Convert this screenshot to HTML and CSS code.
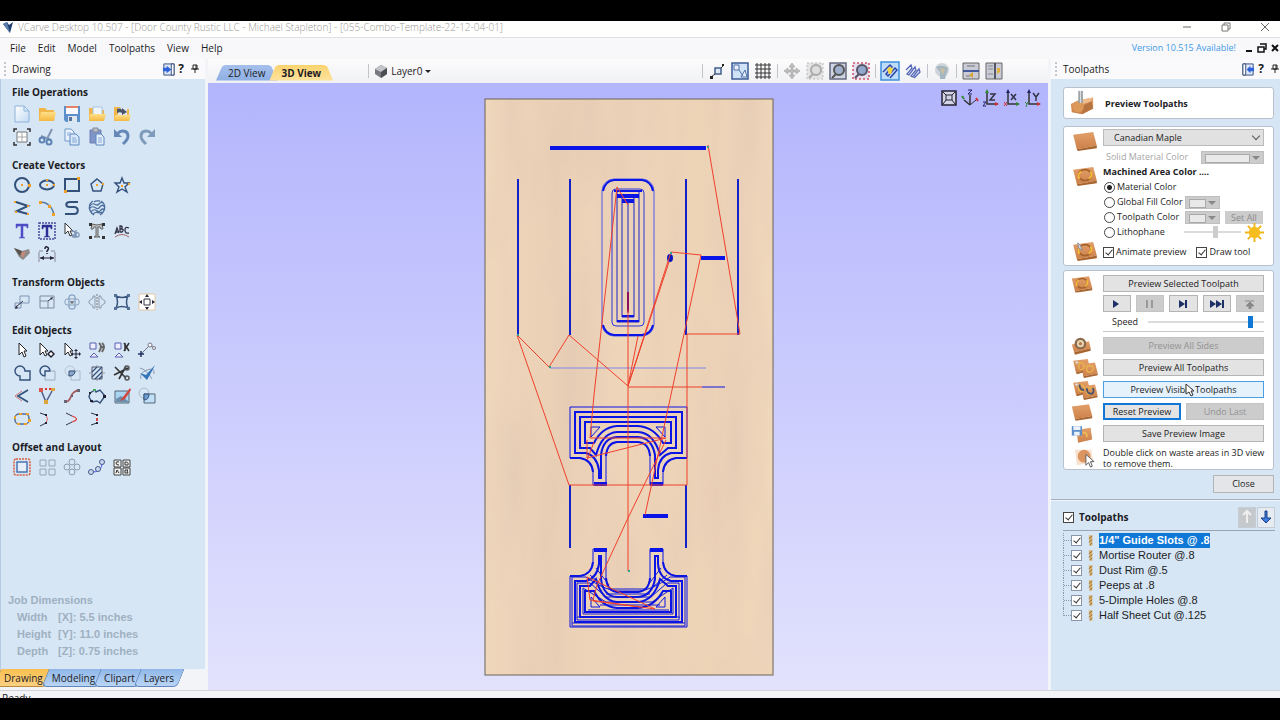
FILE: index.html
```
<!DOCTYPE html>
<html lang="en">
<head>
<meta charset="utf-8">
<title>VCarve Desktop 10.507</title>
<meta name="viewport" content="width=device-width, initial-scale=1">
<link rel="stylesheet" href="styles.css">
</head>
<body>

<!-- icon sheet -->
<svg class="sheet" aria-hidden="true">
<defs>
<linearGradient id="gOrange" x1="0" y1="0" x2="0" y2="1"><stop offset="0" stop-color="#e3a06a"/><stop offset="1" stop-color="#cc8048"/></linearGradient>
<linearGradient id="gFolder" x1="0" y1="0" x2="0" y2="1"><stop offset="0" stop-color="#fde08a"/><stop offset="1" stop-color="#f5b840"/></linearGradient>
<linearGradient id="gPage" x1="0" y1="0" x2="1" y2="1"><stop offset="0" stop-color="#fff"/><stop offset="1" stop-color="#c2daf3"/></linearGradient>
</defs>

<!-- file -->
<symbol id="new" viewBox="0 0 20 20"><path d="M3 2h9l5 5v11H3z" fill="url(#gPage)" stroke="#8fb2da"/><path d="M12 2v5h5z" fill="#dcebfa" stroke="#8fb2da"/></symbol>
<symbol id="open" viewBox="0 0 20 20"><path d="M2 4h6l2 2h7v11H2z" fill="#f0b64a"/><path d="M4 8h15l-2 9H2z" fill="url(#gFolder)"/></symbol>
<symbol id="save" viewBox="0 0 20 20"><path d="M2 2h16v16H4l-2-2z" fill="#5d8fcb"/><path d="M4 2h12v8H4z" fill="#f7f9fc"/><path d="M4 2h12v2H4z" fill="#e87f66"/><path d="M6 12h9v6H6z" fill="#dfe6ee"/><path d="M7 13h3v4H7z" fill="#56749c"/></symbol>
<symbol id="open2" viewBox="0 0 20 20"><path d="M2 4h5l2 2h8v11H2z" fill="#f0b64a"/><path d="M6 3h9v9H6z" fill="#eef4fb" stroke="#aac3df"/><path d="M3 10h16l-2 7H2z" fill="url(#gFolder)"/></symbol>
<symbol id="import" viewBox="0 0 20 20"><path d="M2 3h6l2 2h7v12H2z" fill="#f0b64a"/><path d="M6 4h9v7H6z" fill="#dfe8f2"/><path d="M5 5c4-1 5 0 5 2V4l5 4-5 3V9C9 8 7 8 5 9z" fill="#4b5566"/><path d="M3 11h16l-2 6H2z" fill="url(#gFolder)"/></symbol>
<symbol id="job" viewBox="0 0 20 20"><path d="M5 5h10v10H5z" fill="#fff" stroke="#777"/><path d="M10 5v10M5 10h10" stroke="#aaa"/><path d="M2 5V2h3M15 2h3v3M18 15v3h-3M5 18H2v-3" fill="none" stroke="#333" stroke-width="1.5"/></symbol>
<symbol id="cut" viewBox="0 0 20 20"><path d="M15 2l-5 10M4 9l10 4" stroke="#8297b3" stroke-width="2"/><g fill="none" stroke="#5d83b5" stroke-width="2"><circle cx="5" cy="13" r="2.5"/><circle cx="12" cy="15" r="2.5"/></g></symbol>
<symbol id="copy" viewBox="0 0 20 20"><path d="M3 2h6l3 3v9H3z" fill="#e9f2fc" stroke="#6f97c8"/><path d="M8 7h6l3 3v8H8z" fill="#d8e8fa" stroke="#5d88c0"/><path d="M5 6h4M5 8h3M10 11h4M10 13h5M10 15h5" stroke="#88aad4"/></symbol>
<symbol id="paste" viewBox="0 0 20 20"><path d="M3 3h11v13H3z" fill="#8095ca" stroke="#6c7fb2"/><path d="M6 1h5v4H6z" fill="#b9bfca" stroke="#828a99"/><path d="M9 7h5l3 3v8H9z" fill="#e4eefb" stroke="#5d88c0"/><path d="M11 11h4M11 13h4M11 15h4" stroke="#88aad4"/></symbol>
<symbol id="undo" viewBox="0 0 20 20"><path d="M5 7c5-5 11-3 11 2 0 4-3 6-5 8" fill="none" stroke="#6688b8" stroke-width="3"/><path d="M2 2v8h8z" fill="#6688b8"/></symbol>
<symbol id="redo" viewBox="0 0 20 20"><path d="M15 7C10 2 4 4 4 9c0 4 3 6 5 8" fill="none" stroke="#7f9bbb" stroke-width="3"/><path d="M18 2v8h-8z" fill="#7f9bbb"/></symbol>

<!-- create vectors -->
<symbol id="circle" viewBox="0 0 20 20"><circle cx="10" cy="10" r="7" fill="none" stroke="#33507a" stroke-width="2"/><path d="M9 9h2v2H9zM16 9h3v3h-3z" fill="#eda128"/></symbol>
<symbol id="ellipse" viewBox="0 0 20 20"><ellipse cx="10" cy="10" rx="7" ry="4.500" fill="none" stroke="#33507a" stroke-width="2"/><path d="M9 9h2v2H9zM9 4h2v2H9zM16 9h2v2h-2z" fill="#eda128"/></symbol>
<symbol id="rect" viewBox="0 0 20 20"><path d="M3 4h14v12H3z" fill="none" stroke="#33507a" stroke-width="2"/><path d="M2 15h3v3H2zM15 2h3v3h-3z" fill="#eda128"/></symbol>
<symbol id="poly" viewBox="0 0 20 20"><path d="M10 4l6 5-2 7H6L4 9z" fill="none" stroke="#33507a" stroke-width="1.400"/><path d="M9 9h2v2H9zM15 8h2v2h-2z" fill="#eda128"/></symbol>
<symbol id="star" viewBox="0 0 20 20"><path d="M10 3l2 5h5l-4 4 2 5-5-3-5 3 2-5-4-4h5z" fill="none" stroke="#33507a" stroke-width="1.400"/><path d="M9 10h2v2H9zM16 8h2v2h-2z" fill="#eda128"/></symbol>
<symbol id="line" viewBox="0 0 20 20"><path d="M4 4l12 4-11 5 11 3" fill="none" stroke="#33507a" stroke-width="2"/><path d="M2 3h2v2H2zM15 7h2v2h-2zM3 13h2v2H3zM15 15h2v2h-2z" fill="#eda128"/></symbol>
<symbol id="arc" viewBox="0 0 20 20"><path d="M3 4c8 0 12 5 14 12" fill="none" stroke="#5c7da8" stroke-width="1.400"/><path d="M2 3h3v3H2zM11 7h3v3h-3zM15 15h3v3h-3z" fill="#eda128"/></symbol>
<symbol id="curve" viewBox="0 0 20 20"><path d="M16 4H8c-5 0-5 5 0 5h4c5 0 5 7 0 7H3" fill="none" stroke="#33507a" stroke-width="2"/></symbol>
<symbol id="texture" viewBox="0 0 20 20"><g fill="none" stroke="#4b6d9c" stroke-width="1.300"><path d="M3 8c4-6 6 2 9-2 2-2 3-2 4-1M2 11c5-6 7 2 10-1 3-4 4-3 6-1M4 14c4-6 7 2 9-1 2-3 4-2 5-1M6 16c4-4 6 1 9-2M7 4c2-2 4-1 6-1"/><path d="M6 3c-5 3-5 10 1 14M14 3c5 3 5 10-1 14"/></g></symbol>
<symbol id="text" viewBox="0 0 20 20"><path d="M4 3h12v4h-1c0-2-1-2-4-2v11l2 1H7l2-1V5C6 5 5 5 5 7H4z" fill="#4f4ec4" stroke="#4f4ec4" stroke-width=".5"/></symbol>
<symbol id="textbox" viewBox="0 0 20 20"><path d="M2 2h16v16H2z" fill="none" stroke="#4a4a9a" stroke-width="1.500" stroke-dasharray="2 1"/><path d="M5 4h10v4h-1c0-2-1-2-3-2v9l2 1H7l2-1V6C7 6 6 6 6 8H5z" fill="#2f2f94" stroke="#2f2f94" stroke-width=".5"/></symbol>
<symbol id="pick" viewBox="0 0 20 20"><path d="M3 2v11l3-3 2 5 2-1-2-4h3z" fill="#fff" stroke="#333"/><path d="M10 10q3 0 3 2v4h-2q-2-2 2-2M14 9v7q4 0 3-3-1-2-3-1" fill="none" stroke="#7b93b3" stroke-width="1.300"/></symbol>
<symbol id="textfit" viewBox="0 0 20 20"><path d="M5 3q5 2 10 0l1 5h-2l-1-2h-2v9l2 1H7l2-1V6H7L6 8H4z" fill="#bbb" stroke="#666"/><path d="M2 2h3v3H2zM15 2h3v3h-3zM2 15h3v3H2zM15 15h3v3h-3z" fill="#333"/></symbol>
<symbol id="textarc" viewBox="0 0 20 20"><path d="M3 13l2-6 2 5M4 11h3M8 11V5q4 0 1 3 4 0 1 3H8M17 7q-4-2-4 2t4 3" fill="none" stroke="#334" stroke-width="1.300"/><path d="M3 16q7-5 14 0" fill="none" stroke="#a66"/></symbol>
<symbol id="trace" viewBox="0 0 20 20"><path d="M2 4l8 3 7-2 1 4-7 7-4-3z" fill="#8c8a8a"/><path d="M8 9l6-2-3 7z" fill="#c68877"/><path d="M2 4l8 3-2 5z" fill="#59534e"/></symbol>
<symbol id="dims" viewBox="0 0 20 20"><path d="M2 8v10M18 8v10M2 7h4M14 7h4" stroke="#889" fill="none"/><path d="M3 14h14" stroke="#223"/><path d="M3 14l4-2v4zM17 14l-4-2v4z" fill="#223"/><path d="M8 5q0-3 2-2 3 1 0 4v1M10 9v1" stroke="#223" fill="none" stroke-width="1.500"/></symbol>

<!-- transform -->
<symbol id="move" viewBox="0 0 20 20"><path d="M8 4h9v7H8zM3 11h6v5H3z" fill="none" stroke="#7d94b5"/><path d="M4 15l7-6" stroke="#334"/><path d="M3 17l1-4 2 3z" fill="#334"/></symbol>
<symbol id="size" viewBox="0 0 20 20"><path d="M3 4h14v12H3zM3 9h8v7" fill="none" stroke="#7d8ba0"/><path d="M11 9l4-3" stroke="#334"/><path d="M16 5l-1 3-2-2z" fill="#334"/></symbol>
<symbol id="rotate" viewBox="0 0 20 20"><rect x="7" y="3" width="6" height="14" rx="2" fill="none" stroke="#6f8bb3"/><rect x="3" y="7" width="14" height="6" rx="2" fill="none" stroke="#8da2c0"/><path d="M10 9v3M8 10h4" stroke="#555"/></symbol>
<symbol id="mirror" viewBox="0 0 20 20"><path d="M8 4v12H6v-2l-4-3V9l4-3V4zM12 4v12h2v-2l4-3V9l-4-3V4z" fill="none" stroke="#8d99aa"/><path d="M10 2v16" stroke="#777" stroke-dasharray="2 1"/></symbol>
<symbol id="distort" viewBox="0 0 20 20"><path d="M4 4q6 3 12 0-3 6 0 12-6-3-12 0 3-6 0-12z" fill="none" stroke="#38547d" stroke-width="1.500"/><path d="M2 2h3v3H2zM15 2h3v3h-3zM2 15h3v3H2zM15 15h3v3h-3z" fill="#52729a"/></symbol>
<symbol id="align" viewBox="0 0 20 20"><path d="M2 2h16v16H2z" fill="#fff" stroke="#e5c7a8"/><path d="M7 7h6v6H7z" fill="none" stroke="#334"/><path d="M10 2l2 3H8zM10 18l2-3H8zM2 10l3 2V8zM18 10l-3 2V8z" fill="#223"/></symbol>

<!-- edit -->
<symbol id="select" viewBox="0 0 20 20"><path d="M7 3v12l3-3 2 5 2-1-2-5h3z" fill="#fff" stroke="#222"/></symbol>
<symbol id="node" viewBox="0 0 20 20"><path d="M3 3v12l3-3 2 4 2-1-2-4h3z" fill="#fff" stroke="#222"/><path d="M14 10l4 4-4 4-4-4z" fill="#223"/><path d="M14 12l2 2-2 2-2-2z" fill="#fff"/></symbol>
<symbol id="xform" viewBox="0 0 20 20"><path d="M3 3v12l3-3 2 4 2-1-2-4h3z" fill="#fff" stroke="#222"/><path d="M14 10v8M10 14h8" stroke="#223"/><path d="M14 9l2 2h-4zM14 19l2-2h-4zM9 14l2-2v4zM19 14l-2-2v4z" fill="#223"/></symbol>
<symbol id="group" viewBox="0 0 20 20"><path d="M3 3h6v6H3zM3 17l4-4 4 4z" fill="#eef" stroke="#5b5fb0"/><path d="M12 3q4 3 0 9M15 3q4 3 0 9M13 7h4" fill="none" stroke="#666" stroke-width="2"/></symbol>
<symbol id="ungroup" viewBox="0 0 20 20"><path d="M3 3h6v6H3zM3 17l4-4 4 4z" fill="#eef" stroke="#5b5fb0"/><path d="M12 3l5 8M17 3l-5 8M13 3v8" stroke="#333" stroke-width="1.500"/></symbol>
<symbol id="measure" viewBox="0 0 20 20"><path d="M4 14l9-9 4 3" fill="none" stroke="#778"/><circle cx="13" cy="5" r="2" fill="#fff" stroke="#778"/><circle cx="17" cy="8" r="1.500" fill="#fff" stroke="#778"/><path d="M4 11v6M1 14h6" stroke="#236" stroke-width="1.500"/></symbol>
<symbol id="weld" viewBox="0 0 20 20"><path d="M13 8h5v9H8v-4a5 5 0 1 1 5-5z" fill="none" stroke="#33507a" stroke-width="1.400"/></symbol>
<symbol id="subtract" viewBox="0 0 20 20"><path d="M8 13a5 5 0 1 1 5-5H8z" fill="none" stroke="#33507a" stroke-width="1.400"/><path d="M13 8h5v9H8v-4" fill="none" stroke="#9cabc0"/></symbol>
<symbol id="intersect" viewBox="0 0 20 20"><circle cx="8" cy="8" r="5" fill="none" stroke="#b9c5d5"/><path d="M9 8h9v9H9z" fill="none" stroke="#aab7c9"/><path d="M7 8h6q0 5-6 5z" fill="#8fa8ca" stroke="#33507a"/></symbol>
<symbol id="hatch" viewBox="0 0 20 20"><path d="M5 4h10v12H5z" fill="none" stroke="#556"/><path d="M5 9l5-5M5 14L15 4M8 16l7-7M12 16l3-3" stroke="#33507a" stroke-width="1.300"/><path d="M2 10h2M16 10h2M10 2v1M10 17v1" stroke="#999"/></symbol>
<symbol id="trim" viewBox="0 0 20 20"><path d="M3 4l11 11M2 12l14-7M7 16L14 3" stroke="#333" stroke-width="1.600"/><g fill="none" stroke="#555" stroke-width="1.500"><circle cx="15" cy="5" r="2"/><circle cx="15" cy="15" r="2"/></g></symbol>
<symbol id="knife" viewBox="0 0 20 20"><path d="M3 5q6 1 12 11M4 16Q2 10 10 7t7 4" fill="none" stroke="#8b9ab0"/><path d="M18 2l-3 6-5 9-7-7 6 2z" fill="#3474b8"/></symbol>
<symbol id="fillet" viewBox="0 0 20 20"><path d="M16 4L6 10l10 6" fill="none" stroke="#33507a" stroke-width="1.700"/><path d="M10 5L3 10l7 5" fill="none" stroke="#c77"/></symbol>
<symbol id="extend" viewBox="0 0 20 20"><path d="M4 4l5 12 6-11" fill="none" stroke="#555b8b" stroke-width="1.500"/><path d="M4 3h12" stroke="#d33" stroke-dasharray="2 2" stroke-width="2"/><path d="M2 2h4v4H2z" fill="#d9534a"/><path d="M14 2h4v3h-4zM7 14h4v4H7z" fill="#dca43a"/></symbol>
<symbol id="scurve" viewBox="0 0 20 20"><path d="M3 16c8 0 3-10 14-12" fill="none" stroke="#a55" stroke-width="1.800"/><path d="M2 14h3v3H2zM15 3h3v3h-3zM9 9h2v2H9z" fill="#667"/></symbol>
<symbol id="join" viewBox="0 0 20 20"><path d="M3 7l5-3 1 2 4-2 5 6-5 7-3-2-5 1-3-5z" fill="none" stroke="#33507a" stroke-width="1.400"/><path d="M6 3h3v2H6z" fill="#48a55a"/><path d="M16 9h3v3h-3zM2 6h2v2H2zM3 14h3v2H3z" fill="#223"/></symbol>
<symbol id="bmp" viewBox="0 0 20 20"><path d="M3 5h14v12H3z" fill="#a9d4f2" stroke="#567"/><path d="M4 13l5-3 7 5v1H4z" fill="#6c8ea8"/><path d="M18 2l-7 9-3 4 5-2 6-9z" fill="#d0453c"/></symbol>
<symbol id="crop" viewBox="0 0 20 20"><circle cx="7" cy="7" r="5" fill="none" stroke="#aebbcb"/><path d="M7 8h11v9H7z" fill="#bfe0f7" stroke="#567"/><path d="M7 8h5q0 6-5 6z" fill="#6f9ed2" stroke="#33507a"/></symbol>
<symbol id="nodes" viewBox="0 0 20 20"><rect x="3" y="5" width="14" height="10" rx="4" fill="none" stroke="#556e96" stroke-width="1.500"/><path d="M2 7h2v3H2zM7 4h3v2H7zM14 4h3v2h-3zM16 10h3v3h-3zM12 14h3v2h-3zM5 14h3v2H5z" fill="#eda128"/></symbol>
<symbol id="fit1" viewBox="0 0 20 20"><path d="M3 4l6 2M9 14l-6 3" stroke="#334" fill="none"/><path d="M9 6q3 4 0 8" fill="none" stroke="#d66"/><path d="M8 5h2v2H8zM8 13h2v2H8z" fill="#223"/></symbol>
<symbol id="fit2" viewBox="0 0 20 20"><path d="M4 4l6 3M4 16l6-3" stroke="#334" fill="none"/><path d="M10 7q9 3 0 6" fill="none" stroke="#d44" stroke-width="1.300"/></symbol>
<symbol id="fit3" viewBox="0 0 20 20"><path d="M4 4l6 2M4 16l6-2" stroke="#334" fill="none"/><path d="M9 5h2v2H9zM9 13h2v2H9z" fill="#223"/><path d="M9 9h2v3H9z" fill="#d44"/></symbol>

<!-- offset -->
<symbol id="offset" viewBox="0 0 20 20"><rect x="2" y="2" width="16" height="16" rx="2" fill="none" stroke="#d65c3c" stroke-width="1.500" stroke-dasharray="2 1"/><path d="M5 5h10v10H5z" fill="#e6eefa" stroke="#4b74b3" stroke-width="1.500"/></symbol>
<symbol id="array" viewBox="0 0 20 20"><path d="M3 3h6v6H3zM12 3h6v6h-6zM3 12h6v6H3zM12 12h6v6h-6z" fill="none" stroke="#98a5b5"/></symbol>
<symbol id="ring" viewBox="0 0 20 20"><g fill="none" stroke="#8f9dae"><circle cx="10" cy="5" r="3"/><circle cx="10" cy="15" r="3"/><circle cx="5" cy="10" r="3"/><circle cx="15" cy="10" r="3"/></g></symbol>
<symbol id="along" viewBox="0 0 20 20"><path d="M4 15q12 1 11-11" fill="none" stroke="#55f"/><g fill="#cdd8ec" stroke="#445a8c"><circle cx="4" cy="15" r="2.500"/><circle cx="11" cy="12" r="2.500"/><circle cx="15" cy="5" r="2.500"/></g></symbol>
<symbol id="nest" viewBox="0 0 20 20"><path d="M2 3h7v7H2zM11 3h7v7h-7zM2 11h7v7H2zM11 11h7v7h-7z" fill="#eee" stroke="#444"/><path d="M7 5q-3-1-3 1t3 2M13 5q4 0 3 3h-3zM4 16l1-3 2 3M13 13h3l-1 1 1 2h-3z" fill="none" stroke="#333"/></symbol>

<!-- view toolbar -->
<symbol id="snap" viewBox="0 0 20 20"><path d="M8 7h6v6H8z" fill="#dfe9f6" stroke="#445f8c" stroke-width="1.500"/><path d="M4 16l4-3M14 7l3-3" stroke="#333"/><path d="M3 15h3v3H3zM15 3h2v2h-2z" fill="#222"/></symbol>
<symbol id="snap2" viewBox="0 0 20 20"><path d="M2 2h16v16H2z" fill="#cfe2f7" stroke="#3c5c96" stroke-width="1.500"/><path d="M4 4h5v5H4zM9 9l4 6M11 16l4-7 2 7z" fill="#eef" stroke="#4f73a8"/></symbol>
<symbol id="grid" viewBox="0 0 20 20"><path d="M4 2v16M8 2v16M12 2v16M16 2v16M2 4h16M2 8h16M2 12h16M2 16h16" stroke="#333"/></symbol>
<symbol id="pan" viewBox="0 0 20 20"><path d="M10 2l3 4h-2v3h3V7l4 3-4 3v-2h-3v3h2l-3 4-3-4h2v-3H6v2l-4-3 4-3v2h3V6H7z" fill="#bcbcbc" stroke="#999" stroke-width=".5"/></symbol>
<symbol id="zoomg" viewBox="0 0 20 20"><path d="M2 2h16v16H2z" fill="#e4e4e4" stroke="#bbb" stroke-dasharray="2 2"/><circle cx="11" cy="9" r="5" fill="#ddd" stroke="#aaa" stroke-width="2"/><path d="M8 13l-4 4" stroke="#aaa" stroke-width="2"/></symbol>
<symbol id="zoomb" viewBox="0 0 20 20"><path d="M2 2h16v16H2z" fill="#cfd4e2" stroke="#666a80" stroke-width="1.500"/><circle cx="11" cy="9" r="5" fill="#9fb0cc" stroke="#555" stroke-width="2"/><path d="M8 13l-4 4" stroke="#555" stroke-width="2"/></symbol>
<symbol id="zooms" viewBox="0 0 20 20"><path d="M2 2h16v16H2z" fill="#e5dff0" stroke="#d0526a" stroke-width="1.500" stroke-dasharray="2 2"/><circle cx="11" cy="9" r="5" fill="#93a6cc" stroke="#556" stroke-width="2"/><path d="M8 13l-4 4" stroke="#556" stroke-width="2"/></symbol>
<symbol id="tp1" viewBox="0 0 20 20"><path d="M1 1h18v18H1z" fill="#bfdcf8" stroke="#3f8fdc" stroke-width="1.500"/><path d="M3 11l7-7 2 2-6 7 2 2 7-8 2 2-7 8" fill="none" stroke="#2c45a8" stroke-width="1.500"/><path d="M7 8q3-4 6 0l-2 5H9z" fill="#f4d33e"/></symbol>
<symbol id="tp2" viewBox="0 0 20 20"><path d="M3 9l5-5 1 3-5 6 2 1 6-8 1 3-5 6 2 1 6-8 1 3-6 6" fill="none" stroke="#5467b8" stroke-width="1.300"/></symbol>
<symbol id="head" viewBox="0 0 20 20"><circle cx="10" cy="9" r="7" fill="#cfd4d8"/><path d="M4 6q6-3 12 1l-3 11H8V11z" fill="#a4b7c1"/><path d="M8 7l5 1-2 6z" fill="#cdbf9f"/></symbol>
<symbol id="tile1" viewBox="0 0 20 20"><path d="M2 2h16v16H2z" fill="#c9cbd6" stroke="#666"/><path d="M2 9h16v2H2z" fill="#445a9c"/><path d="M6 5h8M5 15h4" stroke="#777"/><path d="M8 14l4-3v6z" fill="#d9a436"/></symbol>
<symbol id="tile2" viewBox="0 0 20 20"><path d="M2 2h16v16H2z" fill="#c9cbd6" stroke="#666"/><path d="M10 2h2v16h-2z" fill="#556"/><path d="M4 5h5M4 8h5M4 13h5" stroke="#888"/><path d="M13 7h3v4l-3 2z" fill="#e5b040"/></symbol>
<symbol id="iso" viewBox="0 0 20 20"><path d="M3 3h14v14H3z" fill="#d4d5e6" stroke="#223" stroke-width="1.500"/><path d="M7 7h6v5H7zM4 4l3 3M16 4l-3 3M4 16l3-4M16 16l-3-4" fill="none" stroke="#223"/></symbol>
<symbol id="axis" viewBox="0 0 20 20"><path d="M10 7v10M4 12l6 5" stroke="#333" stroke-width="1.500"/><path d="M10 17l6-5" stroke="#333"/><path d="M8 2h4L8 6h4" fill="none" stroke="#226"/><path d="M2 8l2 3" stroke="#383" stroke-width="2"/><path d="M16 10l2 3" stroke="#c33" stroke-width="2"/></symbol>
<symbol id="axz" viewBox="0 0 20 20"><path d="M6 3v13h11" fill="none" stroke="#333" stroke-width="1.500"/><path d="M6 1l2 4H4z" fill="#383"/><path d="M18 16l-4-2v4z" fill="#c33"/><path d="M9 6h5l-5 6h5" fill="none" stroke="#334" stroke-width="1.500"/><path d="M2 14h3l-3 4h3" fill="none" stroke="#226"/></symbol>
<symbol id="axx" viewBox="0 0 20 20"><path d="M6 3v13h11" fill="none" stroke="#333" stroke-width="1.500"/><path d="M6 1l2 4H4z" fill="#226"/><path d="M18 16l-4-2v4z" fill="#383"/><path d="M9 6l5 6M14 6l-5 6" stroke="#334" stroke-width="1.500"/><path d="M2 14l3 4M5 14l-3 4" stroke="#c33"/></symbol>
<symbol id="axy" viewBox="0 0 20 20"><path d="M6 3v13h11" fill="none" stroke="#333" stroke-width="1.500"/><path d="M6 1l2 4H4z" fill="#226"/><path d="M18 16l-4-2v4z" fill="#c33"/><path d="M10 5l3 4 3-4M13 9v4" fill="none" stroke="#334" stroke-width="1.500"/><path d="M2 14l2 2 1-2M4 16l-1 3" fill="none" stroke="#383"/></symbol>

<!-- panel headers and windows -->
<symbol id="dockl" viewBox="0 0 14 14"><path d="M2 1h11v12H2z" fill="#dfe8fb" stroke="#334a78"/><path d="M10 1h3v12h-3z" fill="#fff" stroke="#334a78"/><path d="M1 5h4V3l5 4-5 4V9H1z" fill="#2f62d8"/></symbol>
<symbol id="dockr" viewBox="0 0 14 14"><path d="M1 1h11v12H1z" fill="#dfe8fb" stroke="#334a78"/><path d="M1 1h3v12H1z" fill="#fff" stroke="#334a78"/><path d="M13 5H9V3L5 7l4 4V9h4z" fill="#2f62d8"/></symbol>
<symbol id="pin" viewBox="0 0 10 10"><path d="M3 1h4v4H3zM1 5h8M5 5v4M6 1v4" fill="none" stroke="#222"/></symbol>
<symbol id="mdimin" viewBox="0 0 10 10"><path d="M2 8h6" stroke="#111" stroke-width="2"/></symbol>
<symbol id="mdires" viewBox="0 0 10 10"><path d="M3 1h6v5H7M1 4h6v5H1z" fill="none" stroke="#111" stroke-width="1.500"/></symbol>
<symbol id="mdicls" viewBox="0 0 10 10"><path d="M2 2l6 6M8 2l-6 6" stroke="#111" stroke-width="2"/></symbol>

<!-- material boards -->
<symbol id="board" viewBox="0 0 28 22"><path d="M1 4l22-3 4 15-22 4z" fill="url(#gOrange)"/><path d="M5 20l22-4v3L6 22z" fill="#a9652f"/></symbol>
<symbol id="boardo" viewBox="0 0 28 22"><use href="#board"/><ellipse cx="14" cy="10" rx="7" ry="6" fill="none" stroke="#a5622c" stroke-width="2"/><path d="M20 6q3 5-2 8M8 14q-3-5 2-8" fill="none" stroke="#f5bd3a" stroke-width="2"/></symbol>
<symbol id="boardt" viewBox="0 0 28 22"><use href="#boardo"/><path d="M6 2l3 3 2 5-4-2z" fill="#d2d8de" stroke="#889"/></symbol>
<symbol id="boards" viewBox="0 0 28 22"><path d="M1 3l16-2 3 12-16 3z" fill="url(#gOrange)"/><path d="M10 7l15-2 3 12-16 3z" fill="url(#gOrange)"/><path d="M12 20l16-3v2l-15 3zM4 16l8-2v2l-7 2z" fill="#a9652f"/><path d="M8 5q6 0 5 6-5 4-6-1zM16 9q8-2 7 4-4 5-7 1z" fill="none" stroke="#e9b34a" stroke-width="1.500"/><path d="M5 3v4M3 5h4" stroke="#ddd"/></symbol>
<symbol id="boardsv" viewBox="0 0 28 22"><use href="#boards"/><path d="M8 5q0 6 5 6M16 9q0 7 6 6 3-4 0-6" fill="none" stroke="#49506a" stroke-width="2"/></symbol>
<symbol id="mill" viewBox="0 0 28 22"><path d="M1 9l22-4 2 9-21 5z" fill="url(#gOrange)"/><path d="M4 19l21-5v3L5 22z" fill="#a9652f"/><circle cx="12" cy="8" r="6" fill="#e5d6b8" stroke="#8d6a49" stroke-width="3"/><circle cx="12" cy="8" r="2" fill="#b57540"/></symbol>
<symbol id="savei" viewBox="0 0 28 22"><path d="M7 6l18-3 2 15-18 4z" fill="url(#gOrange)"/><path d="M15 9q6 0 5 6" fill="none" stroke="#f0c050" stroke-width="2"/><path d="M1 1h13v12H1z" fill="#5d8fcb"/><path d="M3 1h9v5H3zM4 8h7v5H4z" fill="#edf2f8"/></symbol>
<symbol id="waste" viewBox="0 0 28 22"><path d="M3 2l18 0 2 14-18 3z" fill="#f8e1cf"/><ellipse cx="13" cy="9" rx="7" ry="7" fill="#dd9560"/><path d="M15 7v12l3-3 2 5 2-1-2-5h4z" fill="#fff" stroke="#555"/></symbol>
<symbol id="preview" viewBox="0 0 28 28"><path d="M10 11l16-3v12l-12 6L3 24 2 15z" fill="url(#gOrange)"/><path d="M10 11l16-3-3 5-12 3z" fill="#efbd8d"/><path d="M14 26l12-6-2-8-9 5z" fill="#b87440"/><circle cx="10" cy="18" r="6" fill="#dc9858"/><path d="M10 1h5v13h-5z" fill="#9da3a8"/><path d="M12 1h1v13h-1z" fill="#e5e8ea"/></symbol>
<symbol id="bit" viewBox="0 0 8 14"><path d="M2 1h4v12H3z" fill="#d8b06c"/><path d="M2 5l4-3M2 9l4-3M3 12l3-2" stroke="#8c6733"/></symbol>
<symbol id="sun" viewBox="0 0 20 20"><path d="M10 0v20M0 10h20M3 3l14 14M17 3L3 17" stroke="#f1b416" stroke-width="2"/><circle cx="10" cy="10" r="6" fill="#f5bd20"/></symbol>
<symbol id="arrow" viewBox="0 0 10 14"><path d="M1 1v10l3-2 2 4 2-1-2-4h3z" fill="#fff" stroke="#333"/></symbol>
</svg>

<div id="app">

<div id="titlebar">
	<svg class="logo" viewBox="0 0 12 12"><path d="M1 3l4-2 2 3 4-3-3 11z" fill="#1f3f73"/><path d="M1 3l4-2 3 11z" fill="#5d7fae"/></svg>
	<span class="title">VCarve Desktop 10.507 - [Door County Rustic LLC - Michael Stapleton] - [055-Combo-Template-22-12-04-01]</span>
	<div class="winbtns">
		<button type="button" aria-label="Minimize"><svg viewBox="0 0 10 10"><path d="M1 5h8" stroke="#666"/></svg></button>
		<button type="button" aria-label="Restore"><svg viewBox="0 0 10 10"><path d="M1 3h6v6H1zM3 3V1h6v6H7" fill="none" stroke="#777"/></svg></button>
		<button type="button" aria-label="Close"><svg viewBox="0 0 10 10"><path d="M1 1l8 8M9 1l-8 8" stroke="#666"/></svg></button>
	</div>
</div>

<div id="menu">
	<button type="button">File</button>
	<button type="button">Edit</button>
	<button type="button">Model</button>
	<button type="button">Toolpaths</button>
	<button type="button">View</button>
	<button type="button">Help</button>
	<a href="#update" class="version">Version 10.515 Available!</a>
	<div class="mdi">
		<button type="button" aria-label="Minimize view"><svg><use href="#mdimin"/></svg></button>
		<button type="button" aria-label="Restore view"><svg><use href="#mdires"/></svg></button>
		<button type="button" aria-label="Close view"><svg><use href="#mdicls"/></svg></button>
	</div>
</div>

<div id="work">

<div id="drawing">
	<div class="panelhead">
		<span class="grip"></span><span class="name">Drawing</span>
		<svg class="dock"><use href="#dockl"/></svg><b>?</b><svg class="pin"><use href="#pin"/></svg>
	</div>
	<div class="tools">
		<h2>File Operations</h2>
		<div class="icons">
			<button type="button" aria-label="New"><svg><use href="#new"/></svg></button>
			<button type="button" aria-label="Open"><svg><use href="#open"/></svg></button>
			<button type="button" aria-label="Save"><svg><use href="#save"/></svg></button>
			<button type="button" aria-label="Open from"><svg><use href="#open2"/></svg></button>
			<button type="button" aria-label="Import" class="last"><svg><use href="#import"/></svg></button>
			<button type="button" aria-label="Job setup"><svg><use href="#job"/></svg></button>
			<button type="button" aria-label="Cut"><svg><use href="#cut"/></svg></button>
			<button type="button" aria-label="Copy"><svg><use href="#copy"/></svg></button>
			<button type="button" aria-label="Paste"><svg><use href="#paste"/></svg></button>
			<button type="button" aria-label="Undo"><svg><use href="#undo"/></svg></button>
			<button type="button" aria-label="Redo"><svg><use href="#redo"/></svg></button>
		</div>
		<h2>Create Vectors</h2>
		<div class="icons">
			<button type="button" aria-label="Circle"><svg><use href="#circle"/></svg></button>
			<button type="button" aria-label="Ellipse"><svg><use href="#ellipse"/></svg></button>
			<button type="button" aria-label="Rectangle"><svg><use href="#rect"/></svg></button>
			<button type="button" aria-label="Polygon"><svg><use href="#poly"/></svg></button>
			<button type="button" aria-label="Star" class="last"><svg><use href="#star"/></svg></button>
			<button type="button" aria-label="Polyline"><svg><use href="#line"/></svg></button>
			<button type="button" aria-label="Arc"><svg><use href="#arc"/></svg></button>
			<button type="button" aria-label="Curve"><svg><use href="#curve"/></svg></button>
			<button type="button" aria-label="Texture" class="last2"><svg><use href="#texture"/></svg></button>
			<button type="button" aria-label="Text"><svg><use href="#text"/></svg></button>
			<button type="button" aria-label="Text box"><svg><use href="#textbox"/></svg></button>
			<button type="button" aria-label="Select text"><svg><use href="#pick"/></svg></button>
			<button type="button" aria-label="Fit text"><svg><use href="#textfit"/></svg></button>
			<button type="button" aria-label="Text on curve" class="last"><svg><use href="#textarc"/></svg></button>
			<button type="button" aria-label="Trace bitmap"><svg><use href="#trace"/></svg></button>
			<button type="button" aria-label="Dimensions"><svg><use href="#dims"/></svg></button>
		</div>
		<h2>Transform Objects</h2>
		<div class="icons">
			<button type="button" aria-label="Move"><svg><use href="#move"/></svg></button>
			<button type="button" aria-label="Size"><svg><use href="#size"/></svg></button>
			<button type="button" aria-label="Rotate"><svg><use href="#rotate"/></svg></button>
			<button type="button" aria-label="Mirror"><svg><use href="#mirror"/></svg></button>
			<button type="button" aria-label="Distort"><svg><use href="#distort"/></svg></button>
			<button type="button" aria-label="Align"><svg><use href="#align"/></svg></button>
		</div>
		<h2>Edit Objects</h2>
		<div class="icons">
			<button type="button" aria-label="Select"><svg><use href="#select"/></svg></button>
			<button type="button" aria-label="Node edit"><svg><use href="#node"/></svg></button>
			<button type="button" aria-label="Transform"><svg><use href="#xform"/></svg></button>
			<button type="button" aria-label="Group"><svg><use href="#group"/></svg></button>
			<button type="button" aria-label="Ungroup"><svg><use href="#ungroup"/></svg></button>
			<button type="button" aria-label="Measure"><svg><use href="#measure"/></svg></button>
			<button type="button" aria-label="Weld"><svg><use href="#weld"/></svg></button>
			<button type="button" aria-label="Subtract"><svg><use href="#subtract"/></svg></button>
			<button type="button" aria-label="Intersect"><svg><use href="#intersect"/></svg></button>
			<button type="button" aria-label="Hatch"><svg><use href="#hatch"/></svg></button>
			<button type="button" aria-label="Trim"><svg><use href="#trim"/></svg></button>
			<button type="button" aria-label="Knife"><svg><use href="#knife"/></svg></button>
			<button type="button" aria-label="Fillet"><svg><use href="#fillet"/></svg></button>
			<button type="button" aria-label="Extend"><svg><use href="#extend"/></svg></button>
			<button type="button" aria-label="Smooth"><svg><use href="#scurve"/></svg></button>
			<button type="button" aria-label="Join"><svg><use href="#join"/></svg></button>
			<button type="button" aria-label="Edit picture"><svg><use href="#bmp"/></svg></button>
			<button type="button" aria-label="Crop"><svg><use href="#crop"/></svg></button>
			<button type="button" aria-label="Fit nodes"><svg><use href="#nodes"/></svg></button>
			<button type="button" aria-label="Join line"><svg><use href="#fit1"/></svg></button>
			<button type="button" aria-label="Join curve"><svg><use href="#fit2"/></svg></button>
			<button type="button" aria-label="Join ends"><svg><use href="#fit3"/></svg></button>
		</div>
		<h2>Offset and Layout</h2>
		<div class="icons">
			<button type="button" aria-label="Offset"><svg><use href="#offset"/></svg></button>
			<button type="button" aria-label="Array copy"><svg><use href="#array"/></svg></button>
			<button type="button" aria-label="Circular copy"><svg><use href="#ring"/></svg></button>
			<button type="button" aria-label="Copy along"><svg><use href="#along"/></svg></button>
			<button type="button" aria-label="Nest"><svg><use href="#nest"/></svg></button>
		</div>
		<dl class="job">
			<dt>Job Dimensions</dt>
			<dd><span>Width</span> [X]: 5.5 inches</dd>
			<dd><span>Height</span> [Y]: 11.0 inches</dd>
			<dd><span>Depth</span> [Z]: 0.75 inches</dd>
		</dl>
	</div>
	<div class="lefttabs">
		<button type="button" class="on">Drawing</button>
		<button type="button">Modeling</button>
		<button type="button">Clipart</button>
		<button type="button">Layers</button>
	</div>
</div>

<div id="center">
	<div class="viewbar">
		<div class="viewtabs">
			<button type="button">2D View</button>
			<button type="button" class="on">3D View</button>
		</div>
		<span class="sep"></span>
		<button type="button" class="layer"><svg viewBox="0 0 14 14"><path d="M1 5l6-4 6 3v6l-6 4-6-4z" fill="#777a80"/><path d="M1 5l6-4 6 3-6 4z" fill="#c3c5ca"/><path d="M7 8l6-4v6l-6 4z" fill="#4b4d52"/></svg>Layer0<i></i></button>
		<div class="viewtools">
			<span class="sep"></span>
			<button type="button" aria-label="Snap"><svg><use href="#snap"/></svg></button>
			<button type="button" aria-label="Guides"><svg><use href="#snap2"/></svg></button>
			<button type="button" aria-label="Grid"><svg><use href="#grid"/></svg></button>
			<span class="sep"></span>
			<button type="button" aria-label="Pan"><svg><use href="#pan"/></svg></button>
			<button type="button" aria-label="Zoom"><svg><use href="#zoomg"/></svg></button>
			<button type="button" aria-label="Zoom to fit"><svg><use href="#zoomb"/></svg></button>
			<button type="button" aria-label="Zoom selected"><svg><use href="#zooms"/></svg></button>
			<span class="sep"></span>
			<button type="button" aria-label="Solid toolpaths"><svg><use href="#tp1"/></svg></button>
			<button type="button" aria-label="Toolpaths"><svg><use href="#tp2"/></svg></button>
			<span class="sep"></span>
			<button type="button" aria-label="Shading"><svg><use href="#head"/></svg></button>
			<span class="sep"></span>
			<button type="button" aria-label="Tile rows"><svg><use href="#tile1"/></svg></button>
			<button type="button" aria-label="Tile columns"><svg><use href="#tile2"/></svg></button>
		</div>
	</div>
	<div class="view">
		<svg class="job3d" viewBox="484 98 290 578">
			<defs>
				<linearGradient id="wood" x1="0" x2="1" y1="0" y2="0">
					<stop offset="0" stop-color="#efd7bb"/><stop offset=".25" stop-color="#ead0b5"/>
					<stop offset=".5" stop-color="#efd6b9"/><stop offset=".8" stop-color="#edd3b6"/><stop offset="1" stop-color="#f0d8bb"/>
				</linearGradient>
				<filter id="grain" x="0" y="0" width="1" height="1">
					<feTurbulence type="fractalNoise" baseFrequency=".025 .005" numOctaves="3" seed="4"/>
					<feColorMatrix values="0 0 0 0 .7  0 0 0 0 .52  0 0 0 0 .45  .7 0 0 0 -.25"/>
				</filter>
			</defs>
			<rect x="485" y="99" width="288" height="576" fill="url(#wood)"/>
			<rect x="485" y="99" width="288" height="576" filter="url(#grain)"/>
			<rect x="485" y="99" width="288" height="576" fill="none" stroke="#6d6355"/>

			<!-- cuts -->
			<g fill="none" stroke="#0a14e6">
				<path d="M550 148h156M701 258h24M643 516h25" stroke-width="4"/>
				<path d="M518 179v156M570 179v156M686 179v156M738 179v156M570 485v63M686 485v63" stroke="#1420c8" stroke-width="2"/>
				<path d="M550 368h156" stroke="#7f86ee"/>
				<path d="M702 387h23"/>
				<rect x="602" y="179" width="52" height="157" rx="12" stroke="#5058ea"/>
				<path d="M603 191q2-10 11-11h28q9 1 11 11M603 325q2 9 11 10h28q9-1 11-10" stroke-width="2"/>
				<rect x="612" y="189" width="32" height="137" rx="4" stroke="#2a34dc"/>
				<path d="M617 192v130h22V192M622 198v119h12V198M628 203v110" stroke="#1a24c8"/>
				<path d="M614 191h28M617 321h22M622 316h12" stroke-width="2"/>
				<path d="M617 196h22M622 201h12" stroke-width="4"/>
				<path d="M628 292v20" stroke="#8a1060" stroke-width="2"/>
			</g>
			<ellipse cx="670" cy="258" rx="3" ry="4" fill="#0a14c0"/>
			<g id="tee" fill="none" stroke="#0a14e6" stroke-width="2">
				<path d="M570 407H687V458H676Q664 460 663 472V485H650V456Q649 443 638 442H617Q607 443 606 456V485H593V472Q592 460 580 458H570Z" stroke-width="1"/>
				<path d="M570 458H580Q592 460 593 472M663 472Q664 460 676 458H687M606 456Q607 443 617 442H638Q649 443 650 456"/>
				<path d="M575 412H682V453H671Q659 456 658 470V478H655V455Q652 438 638 437H617Q603 438 601 455V478H599V470Q597 456 586 453H575Z"/>
				<path d="M580 417H676V448H668L660 455Q654 433 638 432H617Q602 433 596 455L590 448H580Z"/>
				<path d="M585 422H671V443H663Q654 427 638 426H617Q602 427 594 443H585Z"/>
				<path d="M591 427H600L591 437ZM665 427H656L665 437Z" stroke-width="1"/>
				<path d="M594 484h13M650 484h13" stroke-width="4"/>
			</g>
			<use href="#tee" transform="matrix(1 0 0 -1 0 1034)"/>
			<g fill="none" stroke="#1019d8">
				<path d="M572 577H586Q604 590 617 591H639Q652 590 670 577H685V626H572ZM577 583H590L606 597H651L667 583H679V620H577ZM583 588V614H673V588L652 602H606ZM588 610H669M600 605H660M606 594H650M610 589H646M590 575l14 12M596 568l13 17M667 575l-14 12M661 568l-13 17M572 623H685M577 617H680"/>
			</g>

			<!-- rapid moves -->
			<g fill="none" stroke="#f0402c">
				<path d="M708 145L740 334H687V485H569L517 335L549 367L569 335L628 386L669 262"/>
				<path d="M628 386L671 252L701 255L672 390L645 515M628 387h74M628 310V571M638 336L628 386"/>
				<path d="M628 205L617 187L594 395L590 438H666L587 458V440M587 460L594 442M666 440L628 518L597 585L593 600"/>
				<path d="M587 577L655 609L590 600L587 577M593 601L640 607"/>
			</g>
			<path d="M707 147h2M670 253h2M517 335h2M549 367h2M628 571h2" stroke="#2fa38c" stroke-width="2"/>
		</svg>
		<div class="axes">
			<button type="button" aria-label="Isometric"><svg><use href="#iso"/></svg></button>
			<button type="button" aria-label="Perspective"><svg><use href="#axis"/></svg></button>
			<button type="button" aria-label="Down Z"><svg><use href="#axz"/></svg></button>
			<button type="button" aria-label="Along X"><svg><use href="#axx"/></svg></button>
			<button type="button" aria-label="Along Y"><svg><use href="#axy"/></svg></button>
		</div>
	</div>
</div>

<div id="toolpaths">
	<div class="panelhead">
		<span class="grip"></span><span class="name">Toolpaths</span>
		<svg class="dock"><use href="#dockr"/></svg><b>?</b><svg class="pin"><use href="#pin"/></svg>
	</div>
	<div class="side">
		<div class="box heading"><svg><use href="#preview"/></svg><h1>Preview Toolpaths</h1></div>

		<div class="box material">
			<svg class="pic"><use href="#board"/></svg>
			<div class="rows">
				<select aria-label="Material"><option>Canadian Maple</option></select>
				<div class="line off"><span>Solid Material Color</span><button type="button" class="swatch wide" disabled aria-label="Solid color"></button></div>
			</div>
			<svg class="pic"><use href="#boardo"/></svg>
			<div class="rows tight">
				<h2>Machined Area Color ....</h2>
				<div class="line"><label><input type="radio" name="area" checked>Material Color</label></div>
				<div class="line"><label><input type="radio" name="area">Global Fill Color</label><button type="button" class="swatch" disabled aria-label="Fill color"></button></div>
				<div class="line"><label><input type="radio" name="area">Toolpath Color</label><button type="button" class="swatch" disabled aria-label="Toolpath color"></button><button type="button" class="setall" disabled>Set All</button></div>
				<div class="line"><label><input type="radio" name="area">Lithophane</label><input type="range" class="litho" value="55" disabled aria-label="Light"><svg class="sun"><use href="#sun"/></svg></div>
			</div>
			<svg class="pic"><use href="#boardt"/></svg>
			<div class="checks">
				<label><input type="checkbox" checked>Animate preview</label>
				<label><input type="checkbox" checked>Draw tool</label>
			</div>
		</div>

		<div class="box actions">
			<svg class="pic small"><use href="#boardo"/></svg>
			<button type="button">Preview Selected Toolpath</button>
			<div class="play">
				<button type="button" aria-label="Play"><svg viewBox="0 0 16 10"><path d="M4 1l6 4-6 4z" fill="#1c2f66"/></svg></button>
				<button type="button" aria-label="Pause" disabled><svg viewBox="0 0 16 10"><path d="M5 1v8M10 1v8" stroke="#999" stroke-width="2"/></svg></button>
				<button type="button" aria-label="Step"><svg viewBox="0 0 16 10"><path d="M4 1l6 4-6 4z" fill="#1c2f66"/><path d="M11 1v8" stroke="#1c2f66" stroke-width="2"/></svg></button>
				<button type="button" aria-label="End"><svg viewBox="0 0 16 10"><path d="M1 1l6 4-6 4zM7 1l6 4-6 4z" fill="#1c2f66"/><path d="M14 1v8" stroke="#1c2f66" stroke-width="2"/></svg></button>
				<button type="button" aria-label="Eject" disabled><svg viewBox="0 0 16 10"><path d="M3 2h9M4 7l4-4 4 4zM7 7h2v3H7z" fill="#888" stroke="#888"/></svg></button>
			</div>
			<label class="speed">Speed <input type="range" value="90"></label>
			<hr>
			<svg class="pic small"><use href="#mill"/></svg>
			<button type="button" disabled>Preview All Sides</button>
			<svg class="pic"><use href="#boards"/></svg>
			<button type="button">Preview All Toolpaths</button>
			<svg class="pic"><use href="#boardsv"/></svg>
			<button type="button" class="hover">Preview Visible Toolpaths<svg class="cursor"><use href="#arrow"/></svg></button>
			<svg class="pic small"><use href="#board"/></svg>
			<div class="pair"><button type="button" class="focus">Reset Preview</button><button type="button" disabled>Undo Last</button></div>
			<svg class="pic small"><use href="#savei"/></svg>
			<button type="button">Save Preview Image</button>
			<svg class="pic"><use href="#waste"/></svg>
			<p>Double click on waste areas in 3D view to remove them.</p>
		</div>

		<button type="button" class="close">Close</button>
	</div>

	<div class="list">
		<div class="listhead">
			<label><input type="checkbox" checked>Toolpaths</label>
			<button type="button" disabled aria-label="Move up"><svg viewBox="0 0 14 16"><path d="M7 2v12M3 6l4-4 4 4" fill="none" stroke="#eee" stroke-width="2"/></svg></button>
			<button type="button" aria-label="Move down"><svg viewBox="0 0 14 16"><path d="M6 2h2v7h4l-5 5-5-5h4z" fill="#3c7cdc" stroke="#1d3f86"/></svg></button>
		</div>
		<ul>
			<li><label><input type="checkbox" checked><svg><use href="#bit"/></svg><span class="sel">1/4" Guide Slots @ .8</span></label></li>
			<li><label><input type="checkbox" checked><svg><use href="#bit"/></svg><span>Mortise Router @.8</span></label></li>
			<li><label><input type="checkbox" checked><svg><use href="#bit"/></svg><span>Dust Rim @.5</span></label></li>
			<li><label><input type="checkbox" checked><svg><use href="#bit"/></svg><span>Peeps at .8</span></label></li>
			<li><label><input type="checkbox" checked><svg><use href="#bit"/></svg><span>5-Dimple Holes @.8</span></label></li>
			<li><label><input type="checkbox" checked><svg><use href="#bit"/></svg><span>Half Sheet Cut @.125</span></label></li>
		</ul>
	</div>
</div>

</div>

<div id="status">Ready</div>
</div>

</body>
</html>
```
FILE: styles.css
```
* {
	box-sizing: border-box;
}

body {
	margin: 0;
	background-color: #000;
	font: 10px/14px "Open Sans", "Noto Sans", sans-serif;
	color: #1c1c24;
}

.sheet {
	position: absolute;
	width: 0;
	height: 0;
}

svg {
	display: block;
	flex: none;
}

button, input, select {
	font: inherit;
	color: inherit;
	margin: 0;
}

button {
	padding: 0;
	border: 0;
	background: none;
}

h1, h2, p, ul, dl, dd {
	margin: 0;
	padding: 0;
}

#app {
	display: flex;
	flex-direction: column;
	min-height: 100vh;
	border-top: 21px solid #000;
	border-bottom: 22px solid #000;
	background-color: #f3f4f7;
}

/* title and menu */
#titlebar {
	display: flex;
	align-items: center;
	height: 17px;
	padding: 0 10px 4px 2px;
	background-color: #fffffd;
	border-bottom: 1px solid #dfe0e4;
	color: #999;
}

.logo {
	width: 12px;
	height: 12px;
}

.title {
	margin-left: 4px;
	font-weight: 300;
	white-space: nowrap;
}

.winbtns {
	display: flex;
	gap: 29px;
	margin-left: auto;
}

.winbtns svg, .mdi svg {
	width: 10px;
	height: 10px;
}

#menu {
	display: flex;
	align-items: center;
	gap: 12px;
	height: 21px;
	padding: 0 0 2px 10px;
	background-color: #f8f8fb;
}

#menu button {
	line-height: 14px;
}

.version {
	margin-left: auto;
	font-size: 9px;
	color: #3f98e6;
	text-decoration: none;
}

#menu .mdi {
	display: flex;
	gap: 3px;
	margin-left: -4px;
}

#work {
	flex: 1;
	display: grid;
	grid-template-columns: 208px minmax(0, 1fr) 232px;
}

/* docked panels */
.panelhead {
	display: flex;
	align-items: center;
	height: 20px;
	padding-right: 5px;
	background-color: #fafafc;
}

.grip {
	width: 2px;
	height: 14px;
	margin: 0 6px 0 4px;
	border-left: 2px dotted #c4c6ca;
}

.panelhead .name {
	flex: 1;
}

.panelhead b {
	width: 12px;
	font-size: 12px;
	text-align: center;
}

.dock {
	width: 13px;
	height: 13px;
}

.pin {
	width: 10px;
	height: 10px;
	margin-left: 3px;
}

#drawing {
	display: flex;
	flex-direction: column;
	padding-right: 3px;
}

.tools {
	flex: 1;
	display: flex;
	flex-direction: column;
	padding: 5px 10px 9px 8px;
	background-color: #d6e6f5;
	border-left: 1px solid #b5cbe2;
}

.tools h2 {
	padding-left: 3px;
	font-size: 10px;
	line-height: 16px;
}

.tools h2:first-child {
	margin-bottom: 2px;
}

.icons {
	display: grid;
	grid-template-columns: repeat(6, 25px);
	grid-auto-rows: 23px;
	margin-bottom: 9px;
}

.icons button {
	width: 25px;
}

.icons .last {
	grid-column: 5 / 7;
}

.icons .last2 {
	grid-column: 4 / 7;
}

.icons svg {
	width: 20px;
	height: 20px;
	margin: auto;
}

.job {
	margin-top: auto;
	margin-left: -1px;
	font: bold 11px/17px "Liberation Sans", Arial, sans-serif;
	color: #9fb0c1;
}

.job dd {
	padding-left: 9px;
}

.job span {
	display: inline-block;
	width: 38px;
}

.lefttabs {
	display: flex;
	height: 21px;
	background-color: #f3f4f7;
}

.lefttabs button {
	position: relative;
	z-index: 0;
	height: 18px;
	padding: 0 5px 0 4px;
}

.lefttabs button::before {
	content: "";
	position: absolute;
	z-index: -1;
	inset: 0 -2px 0 -3px;
	transform: skewX(-22deg);
	background: linear-gradient(#8fb6e8, #b9d5f5);
	border: 1px solid #5f87bd;
	border-top: 0;
	border-radius: 0 0 5px 5px;
}

.lefttabs .on::before {
	background: linear-gradient(#f9c04f, #fcd083);
	border-color: #b98a3a;
}

/* middle view */
#center {
	display: flex;
	flex-direction: column;
}

.viewbar {
	display: flex;
	align-items: center;
	height: 24px;
	padding-right: 44px;
	background: linear-gradient(#fcfcfd, #f0f1f4);
}

.viewtabs {
	display: flex;
	gap: 4px;
	margin: 3px 40px 0 14px;
}

.viewtabs button {
	position: relative;
	z-index: 0;
	height: 16px;
	padding: 0 6px;
}

.viewtabs button::before {
	content: "";
	position: absolute;
	z-index: -1;
	inset: 0 -6px;
	background: linear-gradient(#a6c0ec, #8eaee2);
	clip-path: polygon(10px 0, calc(100% - 10px) 0, calc(100% - 6px) 2px, 100% 100%, 0 100%, 6px 2px);
}

.viewtabs .on {
	font-weight: bold;
}

.viewtabs .on::before {
	background: linear-gradient(#fbd36e, #fde3a0);
}

.sep {
	width: 1px;
	height: 14px;
	margin: 0 1px;
	background-color: #c3c4c8;
}

.layer {
	display: flex;
	align-items: center;
	gap: 3px;
	margin-left: 4px;
}

.layer svg {
	width: 14px;
	height: 14px;
}

.layer i {
	border: 3px solid transparent;
	border-top-color: #222;
	border-bottom: 0;
}

.viewtools {
	display: flex;
	align-items: center;
	gap: 3px;
	margin-left: auto;
}

.viewtools svg {
	width: 20px;
	height: 20px;
}

.view {
	position: relative;
	flex: 1;
	display: flex;
	align-items: center;
	justify-content: center;
	padding-left: 2px;
	background: linear-gradient(#b3b5fd, #e2e2fd);
}

.job3d {
	width: 290px;
	height: 578px;
}

.axes {
	position: absolute;
	top: 5px;
	right: 5px;
	display: flex;
	gap: 1px;
}

.axes svg {
	width: 20px;
	height: 20px;
}

/* toolpath panel */
#toolpaths {
	display: flex;
	flex-direction: column;
	padding-left: 3px;
}

#toolpaths .panelhead {
	padding-right: 0;
}

.side {
	display: flex;
	flex-direction: column;
	padding: 8px 6px 6px 12px;
	background-color: #d6e6f5;
	border-bottom: 1px solid #9fb0c4;
	font-size: 9px;
}

.box {
	background-color: #fff;
	border: 1px solid #b9c2cc;
	border-radius: 3px;
}

.heading {
	display: flex;
	align-items: center;
	gap: 10px;
	height: 32px;
	padding-left: 5px;
}

.heading svg {
	width: 26px;
	height: 26px;
}

.side h1, .side h2 {
	font-size: 9px;
	line-height: 15px;
}

.material, .actions {
	display: grid;
	grid-template-columns: 28px minmax(0, 1fr);
	column-gap: 4px;
	padding: 2px 9px 2px 7px;
}

.material {
	margin-top: 7px;
}

.actions {
	margin-top: 4px;
	padding-top: 4px;
	padding-bottom: 0;
	row-gap: 5px;
	align-items: center;
}

.pic {
	width: 28px;
	height: 20px;
}

.pic.small {
	width: 22px;
}

.rows {
	position: relative;
	display: flex;
	flex-direction: column;
	gap: 4px;
}

.rows.tight {
	gap: 1px;
}

.material .pic {
	margin-top: 2px;
}

.actions .pic {
	margin: -2px 0;
}

.line {
	display: flex;
	align-items: center;
	height: 14px;
}

.line.off {
	padding-left: 3px;
	color: #a6a6a6;
}

.rows label, .checks label, .listhead label, .list li label {
	display: flex;
	align-items: center;
}

input[type=radio] {
	appearance: none;
	flex: none;
	width: 11px;
	height: 11px;
	margin: 0 2px 0 1px;
	border: 1px solid #444;
	border-radius: 50%;
	background-color: #fff;
}

input[type=radio]:checked {
	background: radial-gradient(#222 0 2px, #fff 3px);
}

input[type=checkbox] {
	appearance: none;
	position: relative;
	flex: none;
	width: 11px;
	height: 11px;
	margin: 0 2px 0 0;
	border: 1px solid #444;
	background-color: #fff;
}

input[type=checkbox]::after {
	content: "";
	position: absolute;
	left: 3px;
	top: 0;
	width: 3px;
	height: 6px;
	border: solid #333;
	border-width: 0 1px 1px 0;
	transform: rotate(40deg);
}

select {
	appearance: none;
	height: 17px;
	padding: 0 10px;
	border: 1px solid #bbb;
	border-radius: 0;
	background-color: #e1e1e1;
}

.rows select + .line::before {
	content: "";
	position: absolute;
	right: 5px;
	top: 4px;
	width: 5px;
	height: 5px;
	border: solid #555;
	border-width: 0 1px 1px 0;
	transform: rotate(45deg);
}

.swatch {
	position: relative;
	width: 35px;
	height: 13px;
	background-color: #ccc;
	border: 1px solid #bfbfbf;
}

.swatch::before {
	content: "";
	position: absolute;
	left: 3px;
	right: 13px;
	top: 2px;
	height: 7px;
	border: 1px solid #aaa;
	background-color: #e9e9e9;
}

.swatch::after {
	content: "";
	position: absolute;
	right: 3px;
	top: 4px;
	border: 4px solid transparent;
	border-top-color: #888;
	border-bottom: 0;
}

.line .swatch {
	margin-left: auto;
}

.line .swatch.wide {
	width: 63px;
}

.rows.tight .line label {
	width: 82px;
	white-space: nowrap;
}

.rows.tight .line .swatch {
	margin-left: 0;
}

.setall {
	width: 38px;
	height: 13px;
	margin-left: 5px;
	background-color: #ccc;
	line-height: 13px;
	color: #8b8b8b;
}

input[type=range] {
	appearance: none;
	height: 12px;
	background: linear-gradient(#dcdcdc, #dcdcdc) center / 100% 2px no-repeat;
}

input[type=range]::-webkit-slider-thumb {
	appearance: none;
	width: 5px;
	height: 12px;
	background-color: #0f78d7;
}

.litho {
	width: 57px;
}

input.litho::-webkit-slider-thumb {
	background-color: #ccc;
}

.sun {
	width: 19px;
	height: 19px;
	margin-left: 4px;
}

.checks {
	display: flex;
	gap: 10px;
	height: 24px;
	padding-top: 2px;
}

.actions button {
	position: relative;
	height: 17px;
	background-color: #e3e3e3;
	border: 1px solid #b4b4b4;
	line-height: 14px;
}

.actions button:disabled {
	background-color: #ccc;
	border-color: #c4c4c4;
	color: #929292;
}

.actions .hover {
	background-color: #e5f1fb;
	border-color: #4a9ee6;
}

.actions .focus {
	border: 2px solid #0f78d7;
	line-height: 12px;
}

.cursor {
	position: absolute;
	left: 81px;
	top: 1px;
	width: 10px;
	height: 14px;
}

.play, .speed, .actions hr {
	grid-column: 2;
}

.play {
	display: grid;
	grid-template-columns: repeat(5, 1fr);
	gap: 5px;
	margin-top: -2px;
}

.play svg {
	width: 16px;
	height: 10px;
	margin: auto;
}

.speed {
	display: flex;
	align-items: center;
	gap: 10px;
	height: 12px;
	margin: -1px 0;
	padding-left: 9px;
}

.speed input {
	flex: 1;
	min-width: 0;
}

.actions hr {
	width: 100%;
	margin: -1px 0 0;
	border: 0;
	border-top: 1px solid #c6c6c6;
}

.pair {
	display: grid;
	grid-template-columns: 1fr 1fr;
	gap: 5px;
}

.actions p {
	margin-right: -8px;
	line-height: 11px;
}

.close {
	align-self: flex-end;
	width: 61px;
	height: 18px;
	margin-top: 5px;
	background-color: #e3e5e8;
	border: 1px solid #b4b4b4;
}

.list {
	flex: 1;
	margin-top: 1px;
	padding: 3px 5px 0 12px;
	background-color: #d6e6f5;
}

.listhead {
	display: flex;
	align-items: center;
	gap: 1px;
	height: 27px;
	border-bottom: 1px solid #9aa5b1;
}

.listhead label {
	flex: 1;
	font-size: 10px;
	font-weight: bold;
}

.listhead input {
	margin-right: 5px;
}

.listhead button {
	width: 18px;
	height: 21px;
	border: 1px solid #c4cdd6;
	background-color: #e6ebf1;
}

.listhead button:disabled {
	background-color: #c6c9cc;
}

.listhead svg {
	width: 14px;
	height: 16px;
	margin: auto;
}

.list ul {
	margin-top: 2px;
	list-style: none;
	font: 11px/15px "Liberation Sans", Arial, sans-serif;
}

.list li {
	height: 15px;
	border-left: 1px dotted #8c98a6;
}

.list li:last-child {
	height: 8px;
}

.list li label {
	height: 15px;
}

.list li label::before {
	content: "";
	width: 7px;
	border-top: 1px dotted #8c98a6;
}

.list li input {
	margin: 0 5px 0 0;
	border-color: #8a96a8;
}

.list li svg {
	width: 7px;
	height: 13px;
	margin-right: 5px;
}

.list .sel {
	background-color: #0f78d7;
	color: #fff;
	font-weight: bold;
}

#status {
	height: 8px;
	padding-left: 2px;
	border-top: 1px solid #d3d4d8;
	overflow: hidden;
	line-height: 14px;
}
```
